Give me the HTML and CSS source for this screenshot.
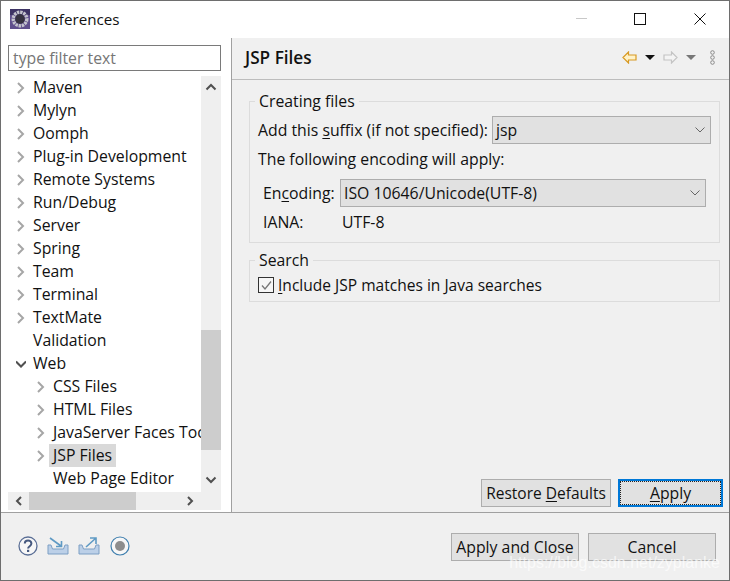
FILE: index.html
```html
<!DOCTYPE html>
<html lang="en">
<head>
<meta charset="utf-8">
<title>Preferences</title>
<link rel="stylesheet" href="styles.css">
</head>
<body>
<div class="window">
  <header class="titlebar">
    <svg class="app-icon" width="20" height="20" viewBox="0 0 20 20"><rect width="20" height="20" fill="#5f4f8c"/><rect x="0" y="0" width="20" height="6" fill="#3d3364"/><circle cx="10" cy="10" r="6.800" fill="none" stroke="#c4c4cc" stroke-width="3.400" stroke-dasharray="2.400 0.800"/><circle cx="10" cy="10" r="4.800" fill="#35323f"/></svg>
    <span class="title">Preferences</span>
    <div class="win-controls">
      <span class="win-btn"><span class="min"></span></span>
      <span class="win-btn"><span class="max"></span></span>
      <span class="win-btn"><svg width="12" height="12" viewBox="0 0 12 12"><path d="M0.500 0.500L11.500 11.500M11.500 0.500L0.500 11.500" stroke="#111" stroke-width="1" fill="none"/></svg></span>
    </div>
  </header>
  <div class="main">
    <aside class="left">
      <div class="filter">type filter text</div>
      <div class="tree-box">
        <div class="tree-row-wrap">
          <ul class="tree">
            <li class="node"><svg class="tw" viewBox="0 0 10 12"><path d="M2 1l5 5-5 5" fill="none" stroke="#a6a6a6" stroke-width="2"/></svg><span class="lab">Maven</span></li>
            <li class="node"><svg class="tw" viewBox="0 0 10 12"><path d="M2 1l5 5-5 5" fill="none" stroke="#a6a6a6" stroke-width="2"/></svg><span class="lab">Mylyn</span></li>
            <li class="node"><svg class="tw" viewBox="0 0 10 12"><path d="M2 1l5 5-5 5" fill="none" stroke="#a6a6a6" stroke-width="2"/></svg><span class="lab">Oomph</span></li>
            <li class="node"><svg class="tw" viewBox="0 0 10 12"><path d="M2 1l5 5-5 5" fill="none" stroke="#a6a6a6" stroke-width="2"/></svg><span class="lab">Plug-in Development</span></li>
            <li class="node"><svg class="tw" viewBox="0 0 10 12"><path d="M2 1l5 5-5 5" fill="none" stroke="#a6a6a6" stroke-width="2"/></svg><span class="lab">Remote Systems</span></li>
            <li class="node"><svg class="tw" viewBox="0 0 10 12"><path d="M2 1l5 5-5 5" fill="none" stroke="#a6a6a6" stroke-width="2"/></svg><span class="lab">Run/Debug</span></li>
            <li class="node"><svg class="tw" viewBox="0 0 10 12"><path d="M2 1l5 5-5 5" fill="none" stroke="#a6a6a6" stroke-width="2"/></svg><span class="lab">Server</span></li>
            <li class="node"><svg class="tw" viewBox="0 0 10 12"><path d="M2 1l5 5-5 5" fill="none" stroke="#a6a6a6" stroke-width="2"/></svg><span class="lab">Spring</span></li>
            <li class="node"><svg class="tw" viewBox="0 0 10 12"><path d="M2 1l5 5-5 5" fill="none" stroke="#a6a6a6" stroke-width="2"/></svg><span class="lab">Team</span></li>
            <li class="node"><svg class="tw" viewBox="0 0 10 12"><path d="M2 1l5 5-5 5" fill="none" stroke="#a6a6a6" stroke-width="2"/></svg><span class="lab">Terminal</span></li>
            <li class="node"><svg class="tw" viewBox="0 0 10 12"><path d="M2 1l5 5-5 5" fill="none" stroke="#a6a6a6" stroke-width="2"/></svg><span class="lab">TextMate</span></li>
            <li class="node"><span class="tw"></span><span class="lab">Validation</span></li>
            <li class="node"><svg class="tw" viewBox="0 0 10 12"><path d="M0 3.500l5 5 5-5" fill="none" stroke="#505050" stroke-width="2"/></svg><span class="lab">Web</span></li>
            <li class="node sub"><svg class="tw" viewBox="0 0 10 12"><path d="M2 1l5 5-5 5" fill="none" stroke="#a6a6a6" stroke-width="2"/></svg><span class="lab">CSS Files</span></li>
            <li class="node sub"><svg class="tw" viewBox="0 0 10 12"><path d="M2 1l5 5-5 5" fill="none" stroke="#a6a6a6" stroke-width="2"/></svg><span class="lab">HTML Files</span></li>
            <li class="node sub"><svg class="tw" viewBox="0 0 10 12"><path d="M2 1l5 5-5 5" fill="none" stroke="#a6a6a6" stroke-width="2"/></svg><span class="lab">JavaServer Faces Tools</span></li>
            <li class="node sub"><svg class="tw" viewBox="0 0 10 12"><path d="M2 1l5 5-5 5" fill="none" stroke="#a6a6a6" stroke-width="2"/></svg><span class="lab selected">JSP Files</span></li>
            <li class="node sub"><span class="tw"></span><span class="lab">Web Page Editor</span></li>
          </ul>
          <div class="vscroll">
            <svg class="sb-arrow" width="20" height="22" viewBox="0 0 20 22"><path d="M5.500 13.500l4.500-4.500 4.500 4.500" fill="none" stroke="#505050" stroke-width="2"/></svg>
            <div class="vspace"></div>
            <div class="vthumb"></div>
            <svg class="sb-arrow" width="20" height="42" viewBox="0 0 20 42"><path d="M5.500 27.500l4.500 4.500 4.500-4.500" fill="none" stroke="#505050" stroke-width="2"/></svg>
          </div>
        </div>
        <div class="hscroll">
          <svg class="h-arrow" width="21" height="18" viewBox="0 0 21 18"><path d="M13 5l-4 4 4 4" fill="none" stroke="#505050" stroke-width="2"/></svg>
          <div class="hthumb"></div>
          <svg class="h-arrow-end" width="21" height="18" viewBox="0 0 21 18"><path d="M8 5l4 4-4 4" fill="none" stroke="#505050" stroke-width="2"/></svg>
        </div>
      </div>
    </aside>
    <section class="right">
      <div class="page-head">
        <h1 class="page-title">JSP Files</h1>
        <div class="nav-tools">
          <svg class="nav-arrow" width="15" height="13" viewBox="0 0 15 13"><path d="M1 6.500L6.500 1v3h7.500v5H6.500v3z" fill="#fff2c8" stroke="#d89a24" stroke-width="1.200"/></svg>
          <span class="caret dark"></span>
          <svg class="nav-arrow next" width="15" height="13" viewBox="0 0 15 13"><path d="M14 6.500L8.500 1v3H1v5h7.500v3z" fill="#f4f4f4" stroke="#c4c4c4" stroke-width="1.200"/></svg>
          <span class="caret gray"></span>
          <svg class="dots" width="7" height="15" viewBox="0 0 7 15"><circle cx="3.500" cy="2.500" r="1.800" fill="none" stroke="#8a8a8a"/><circle cx="3.500" cy="7.500" r="1.800" fill="none" stroke="#8a8a8a"/><circle cx="3.500" cy="12.500" r="1.800" fill="none" stroke="#8a8a8a"/></svg>
        </div>
      </div>
      <div class="content">
        <fieldset class="group creating">
          <legend>Creating files</legend>
          <div class="row suffix-row">
            <span class="row-label">Add this <u>s</u>uffix (if not specified):</span>
            <div class="combo suffix"><span>jsp</span><svg width="10" height="6" viewBox="0 0 10 6"><path d="M0.500 0.500L5 5l4.500-4.500" fill="none" stroke="#666" stroke-width="1"/></svg></div>
          </div>
          <div class="row note-row">The following encoding will apply:</div>
          <div class="enc-grid">
            <span>En<u>c</u>oding:</span>
            <div class="combo encoding"><span>ISO 10646/Unicode(UTF-8)</span><svg width="10" height="6" viewBox="0 0 10 6"><path d="M0.500 0.500L5 5l4.500-4.500" fill="none" stroke="#666" stroke-width="1"/></svg></div>
            <span>IANA:</span>
            <span class="iana">UTF-8</span>
          </div>
        </fieldset>
        <fieldset class="group search">
          <legend>Search</legend>
          <label class="check-row">
            <span class="checkbox"><svg width="13" height="13" viewBox="0 0 13 13"><path d="M2 6.500l3 3.500 6-7.500" fill="none" stroke="#777" stroke-width="1.300"/></svg></span>
            <span class="check-text"><u>I</u>nclude JSP matches in Java searches</span>
          </label>
        </fieldset>
        <div class="page-actions">
          <button class="btn restore">Restore <u>D</u>efaults</button>
          <button class="btn apply"><u>A</u>pply</button>
        </div>
      </div>
    </section>
  </div>
  <footer class="footer">
    <div class="foot-icons">
      <svg width="20" height="20" viewBox="0 0 20 20"><circle cx="10" cy="10" r="9" fill="#f7f7f7" stroke="#5b6f96" stroke-width="1.300"/><path d="M6.800 7.600c0-4.200 6.600-4.200 6.600 0 0 2.800-3.300 2.500-3.300 5" fill="none" stroke="#46597f" stroke-width="2"/><rect x="9" y="13.800" width="2.200" height="2.200" fill="#46597f"/></svg>
      <svg width="22" height="20" viewBox="0 0 22 20"><path d="M1 9h3l1.500 4h11L18 9h3v9H1z" fill="#bcd0e8" stroke="#7d9fc4"/><path d="M3 2l11 8M14.500 5v5.500H9" fill="none" stroke="#5f9ac4" stroke-width="1.600"/></svg>
      <svg width="22" height="20" viewBox="0 0 22 20"><path d="M1 9h3l1.500 4h11L18 9h3v9H1z" fill="#bcd0e8" stroke="#7d9fc4"/><path d="M8 11L18 2M12 2h6v6" fill="none" stroke="#5f9ac4" stroke-width="1.600"/></svg>
      <svg class="record" width="20" height="20" viewBox="0 0 20 20"><circle cx="10" cy="10" r="9" fill="#f7f7f7" stroke="#3f7fae" stroke-width="1.200"/><circle cx="10" cy="10" r="5" fill="#8d8d8d"/></svg>
    </div>
    <div class="foot-actions">
      <button class="btn close">Apply and Close</button>
      <button class="btn cancel">Cancel</button>
    </div>
    <span class="watermark">https://blog.csdn.net/zyplanke</span>
  </footer>
</div>
</body>
</html>
```
FILE: styles.css
```css
* { box-sizing: border-box; }
html, body { margin: 0; padding: 0; }
body { width: 730px; height: 581px; overflow: hidden; font-family: "Open Sans", "Noto Sans", sans-serif; font-size: 15.8px; color: #111; }
u { text-underline-offset: 2px; text-decoration-thickness: 1px; }

.window { position: relative; width: 730px; height: 581px; border: 1px solid #6e6e6e; display: flex; flex-direction: column; background: #fff; }

.titlebar { height: 37px; flex: none; display: flex; align-items: center; padding: 0 0 2px 9px; background: #fff; }
.app-icon { flex: none; margin-top: 1px; }
.title { margin-left: 5px; font-size: 15.2px; }
.win-controls { margin-left: auto; display: flex; }
.win-btn { width: 59px; height: 35px; display: flex; align-items: center; justify-content: center; }
.win-btn:nth-child(2) { margin-right: 1px; margin-left: -1px; }
.min { display: block; width: 11px; height: 1px; background: #c8c8c8; }
.max { display: block; width: 12px; height: 12px; border: 1px solid #111; }

.main { flex: 1; display: flex; min-height: 0; }

.left { width: 231px; flex: none; padding: 7px 10px 2px 7px; display: flex; flex-direction: column; background: #fff; border-right: 1px solid #a0a0a0; }
.filter { height: 26px; flex: none; border: 1px solid #7a7a7a; padding-left: 4px; line-height: 24px; color: #767676; }
.tree-box { flex: 1; min-height: 0; margin-top: 5px; display: flex; flex-direction: column; }
.tree-row-wrap { flex: 1; min-height: 0; display: flex; }
.tree { flex: 1; min-width: 0; margin: 0; padding: 0; list-style: none; overflow: hidden; }
.node { height: 23px; display: flex; align-items: center; white-space: nowrap; padding-left: 8px; }
.node.sub { padding-left: 28px; }
.tw { width: 10px; height: 12px; flex: none; display: block; }
.lab { padding: 0 4px; margin-left: 3px; height: 23px; line-height: 22px; }
.selected { background: #d9d9d9; }

.vscroll { width: 20px; flex: none; background: #efefef; display: flex; flex-direction: column; }
.sb-arrow { display: block; flex: none; }
.vspace { flex: 1; }
.vthumb { height: 120px; flex: none; background: #cdcdcd; }

.hscroll { height: 18px; flex: none; background: #efefef; display: flex; }
.h-arrow, .h-arrow-end { display: block; flex: none; }
.hthumb { width: 107px; background: #cdcdcd; }
.h-arrow-end { margin-left: auto; margin-right: 20px; }

.right { flex: 1; min-width: 0; background: #f0f0f0; display: flex; flex-direction: column; }
.page-head { height: 42px; flex: none; display: flex; align-items: center; padding: 0 13px 3px 13px; border-bottom: 1px solid #bdbdbd; }
.page-title { margin: 0; font-size: 17.2px; font-weight: 600; }
.nav-tools { margin-left: auto; display: flex; align-items: center; }
.caret { width: 0; height: 0; border-left: 5px solid transparent; border-right: 5px solid transparent; border-top: 5px solid #111; margin-left: 8px; }
.caret.gray { border-top-color: #777; }
.next { margin-left: 8px; }
.dots { margin-left: 13px; }

.content { flex: 1; min-height: 0; display: flex; flex-direction: column; padding: 11px 9px 5px 17px; }
.group { margin: 0; padding: 0; border: 1px solid #dcdcdc; min-width: 0; }
.group legend { margin-left: -3px; padding: 0 4px; line-height: 20px; }
.creating { height: 152px; padding: 0 7px 0 8px; }
.search { margin-top: 7px; height: 52px; padding-left: 8px; }

.row { display: flex; align-items: center; }
.suffix-row { height: 28px; margin-top: 5px; }
.row-label { width: 234px; flex: none; }
.note-row { height: 20px; margin-top: 5px; }
.enc-grid { display: grid; grid-template-columns: 77px 366px; grid-template-rows: 28px 29px; margin-top: 10px; padding-left: 5px; align-items: center; row-gap: 0; }
.iana { padding-left: 2px; }

.combo { display: flex; align-items: center; justify-content: space-between; height: 28px; background: #e1e1e1; border: 1px solid #adadad; }
.suffix { width: 219px; padding: 0 5px 0 3px; }
.encoding { width: 366px; padding: 0 5px 0 3px; }

.check-row { display: flex; align-items: center; height: 20px; margin-top: 5px; }
.check-text { font-size: 15.55px; }
.checkbox { width: 16px; height: 16px; flex: none; margin-right: 4px; background: #f6f6f6; border: 1px solid #333; display: flex; align-items: center; justify-content: center; }

.page-actions { margin-top: auto; display: flex; justify-content: flex-end; gap: 7px; margin-right: -3px; }
.btn { font: inherit; color: #111; height: 28px; padding: 0; background: #e1e1e1; border: 1px solid #adadad; }
.restore { width: 130px; font-size: 15.5px; }
.apply { width: 105px; border: 2px solid #0078d7; outline: 1px dotted #222; outline-offset: -3px; }

.footer { position: relative; height: 68px; flex: none; background: #f0f0f0; border-top: 1px solid #a0a0a0; display: flex; align-items: flex-start; padding: 20px 13px 0 17px; }
.foot-icons { display: flex; align-items: center; gap: 9px; margin-top: 3px; }
.record { margin-left: 1px; }
.foot-actions { margin-left: auto; display: flex; gap: 9px; }
.close, .cancel { width: 128px; }
.watermark { position: absolute; right: 9px; bottom: 8px; font-family: "Liberation Sans", sans-serif; font-size: 16px; color: rgba(255,255,255,0.7); white-space: nowrap; }
```
